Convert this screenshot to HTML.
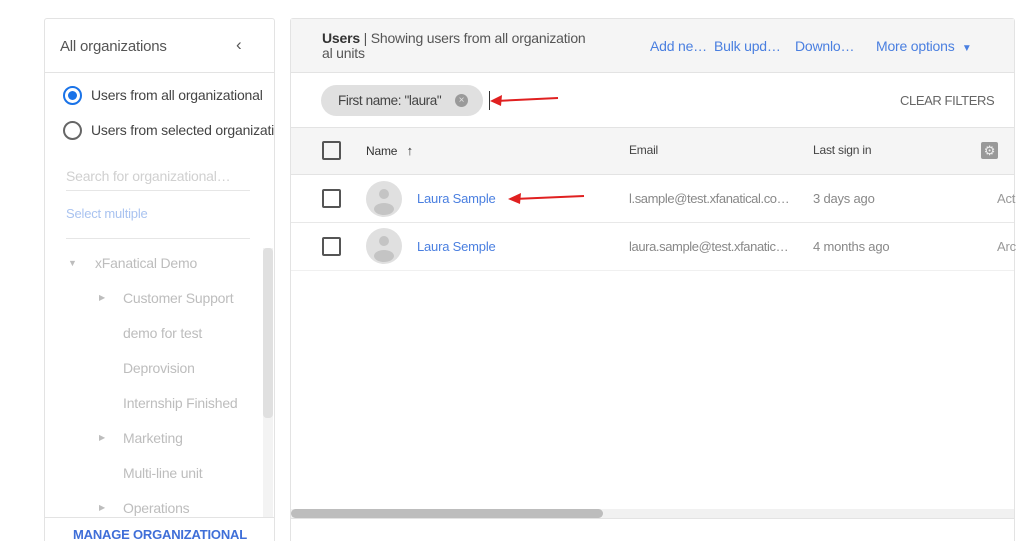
<!DOCTYPE html>
<html><head><style>
*{box-sizing:border-box;margin:0;padding:0}
html,body{width:1024px;height:541px;overflow:hidden}
body{background:#fff;font-family:"Liberation Sans",Arial,sans-serif;position:relative;font-size:13px;letter-spacing:-0.2px}
.a{position:absolute;white-space:nowrap}
.gray{color:#bdbdbd}
.blue{color:#4a7fe0}
</style></head><body>
<!-- left panel -->
<div class="a" style="left:44px;top:18px;width:231px;height:540px;border:1px solid #e3e3e3;border-radius:3px;"></div>
<div class="a" style="left:45px;top:72px;width:229px;height:1px;background:#e3e3e3"></div>
<div class="a" style="left:60px;top:38px;font-size:15px;color:#555">All organizations</div>
<div class="a" style="left:236px;top:35px;font-size:17px;color:#555">‹</div>
<div class="a" style="left:63px;top:86px;width:19px;height:19px;border:2px solid #1a73e8;border-radius:50%"></div>
<div class="a" style="left:68px;top:91px;width:9px;height:9px;background:#1a73e8;border-radius:50%"></div>
<div class="a" style="left:91px;top:87px;font-size:14px;color:#444;width:178px;overflow:hidden">Users from all organizational</div>
<div class="a" style="left:63px;top:121px;width:19px;height:19px;border:2px solid #666;border-radius:50%"></div>
<div class="a" style="left:91px;top:122px;font-size:14px;color:#444;width:183px;overflow:hidden">Users from selected organizations</div>
<div class="a" style="left:66px;top:168px;font-size:14px;color:#d0d0d0;width:184px;overflow:hidden">Search for organizational…</div>
<div class="a" style="left:66px;top:190px;width:184px;height:1px;background:#e6e6e6"></div>
<div class="a" style="left:66px;top:206px;font-size:13px;color:#a9c3f0">Select multiple</div>
<div class="a" style="left:66px;top:238px;width:184px;height:1px;background:#e6e6e6"></div>
<div class="a" style="left:263px;top:248px;width:10px;height:269px;background:#f3f3f3"></div>
<div class="a" style="left:263px;top:248px;width:10px;height:170px;background:#e0e0e0;border-radius:4px"></div>
<div class="a gray" style="left:68px;top:258px;font-size:9px">▼</div>
<div class="a gray" style="left:95px;top:255px;font-size:14px">xFanatical Demo</div>
<div class="a gray" style="left:99px;top:293px;font-size:8px">▶</div>
<div class="a gray" style="left:123px;top:290px;font-size:14px">Customer Support</div>
<div class="a gray" style="left:123px;top:325px;font-size:14px">demo for test</div>
<div class="a gray" style="left:123px;top:360px;font-size:14px">Deprovision</div>
<div class="a gray" style="left:123px;top:395px;font-size:14px">Internship Finished</div>
<div class="a gray" style="left:99px;top:433px;font-size:8px">▶</div>
<div class="a gray" style="left:123px;top:430px;font-size:14px">Marketing</div>
<div class="a gray" style="left:123px;top:465px;font-size:14px">Multi-line unit</div>
<div class="a gray" style="left:99px;top:503px;font-size:8px">▶</div>
<div class="a gray" style="left:123px;top:500px;font-size:14px">Operations</div>
<div class="a" style="left:45px;top:517px;width:229px;height:1px;background:#e3e3e3"></div>
<div class="a" style="left:73px;top:527px;font-size:13px;font-weight:bold;color:#3f6fd8">MANAGE ORGANIZATIONAL</div>
<!-- right panel -->
<div class="a" style="left:290px;top:18px;width:725px;height:540px;border:1px solid #e3e3e3;border-radius:3px"></div>
<div class="a" style="left:291px;top:19px;width:723px;height:54px;background:#f5f5f5;border-bottom:1px solid #e3e3e3"></div>
<div class="a" style="left:322px;top:31px;font-size:14px;color:#555;line-height:15px;width:290px;white-space:normal"><b style="color:#333">Users</b> | Showing users from all organization<br>al units</div>
<div class="a blue" style="left:650px;top:38px;font-size:14px">Add ne…</div>
<div class="a blue" style="left:714px;top:38px;font-size:14px">Bulk upd…</div>
<div class="a blue" style="left:795px;top:38px;font-size:14px">Downlo…</div>
<div class="a blue" style="left:876px;top:38px;font-size:14px">More options &nbsp;<span style="font-size:10px">▼</span></div>
<div class="a" style="left:321px;top:85px;width:162px;height:31px;background:#e0e0e0;border-radius:16px"></div>
<div class="a" style="left:338px;top:93px;font-size:13.5px;color:#444;letter-spacing:-0.4px">First name: "laura"</div>
<div class="a" style="left:455px;top:94px;width:13px;height:13px;background:#9a9a9a;border-radius:50%;color:#e0e0e0;font-size:10px;line-height:13px;text-align:center">×</div>
<div class="a" style="left:489px;top:91px;width:1px;height:19px;background:#333"></div>
<svg class="a" style="left:488px;top:90px" width="72" height="20"><line x1="70" y1="8" x2="8" y2="11" stroke="#e02020" stroke-width="2"/><polygon points="2,11 14,5 13,16" fill="#e02020"/></svg>
<div class="a" style="left:900px;top:93px;font-size:13px;color:#666;letter-spacing:-0.4px">CLEAR FILTERS</div>
<div class="a" style="left:291px;top:127px;width:723px;height:48px;background:#f5f5f5;border-top:1px solid #e3e3e3;border-bottom:1px solid #e3e3e3"></div>
<div class="a" style="left:322px;top:141px;width:19px;height:19px;border:2px solid #555;border-radius:2px"></div>
<div class="a" style="left:366px;top:143px;font-size:12px;color:#333">Name &nbsp;&nbsp;<span style="font-size:13px">↑</span></div>
<div class="a" style="left:629px;top:143px;font-size:12px;color:#444">Email</div>
<div class="a" style="left:813px;top:143px;font-size:12px;color:#444">Last sign in</div>
<div class="a" style="left:981px;top:142px;width:17px;height:17px;background:#999;border-radius:2px;color:#eee;font-size:13px;line-height:17px;text-align:center">⚙</div>
<div class="a" style="left:291px;top:222px;width:723px;height:1px;background:#e8e8e8"></div>
<div class="a" style="left:291px;top:270px;width:723px;height:1px;background:#f0f0f0"></div>
<div class="a" style="left:322px;top:189px;width:19px;height:19px;border:2px solid #555;border-radius:2px"></div>
<div class="a" style="left:322px;top:237px;width:19px;height:19px;border:2px solid #555;border-radius:2px"></div>
<svg class="a" style="left:366px;top:181px" width="36" height="36"><circle cx="18" cy="18" r="18" fill="#e0e0e0"/><circle cx="18" cy="13" r="5" fill="#c4c4c4"/><ellipse cx="18" cy="28" rx="10" ry="6" fill="#c4c4c4"/></svg>
<svg class="a" style="left:366px;top:228px" width="36" height="36"><circle cx="18" cy="18" r="18" fill="#e0e0e0"/><circle cx="18" cy="13" r="5" fill="#c4c4c4"/><ellipse cx="18" cy="28" rx="10" ry="6" fill="#c4c4c4"/></svg>
<div class="a blue" style="left:417px;top:191px;font-size:13px">Laura Sample</div>
<div class="a blue" style="left:417px;top:239px;font-size:13px">Laura Semple</div>
<svg class="a" style="left:506px;top:188px" width="80" height="20"><line x1="78" y1="8" x2="8" y2="11" stroke="#e02020" stroke-width="2"/><polygon points="2,11 15,5 14,16" fill="#e02020"/></svg>
<div class="a" style="left:629px;top:191px;font-size:13px;color:#888;letter-spacing:-0.4px">l.sample@test.xfanatical.co…</div>
<div class="a" style="left:629px;top:239px;font-size:13px;color:#888;letter-spacing:-0.4px">laura.sample@test.xfanatic…</div>
<div class="a" style="left:813px;top:191px;font-size:13px;color:#888">3 days ago</div>
<div class="a" style="left:813px;top:239px;font-size:13px;color:#888">4 months ago</div>
<div class="a" style="left:997px;top:191px;font-size:13px;color:#999">Act</div>
<div class="a" style="left:997px;top:239px;font-size:13px;color:#999">Arc</div>
<div class="a" style="left:291px;top:509px;width:723px;height:9px;background:#f1f1f1"></div>
<div class="a" style="left:291px;top:509px;width:312px;height:9px;background:#bdbdbd;border-radius:5px"></div>
<div class="a" style="left:291px;top:518px;width:723px;height:1px;background:#e3e3e3"></div>
</body></html>
